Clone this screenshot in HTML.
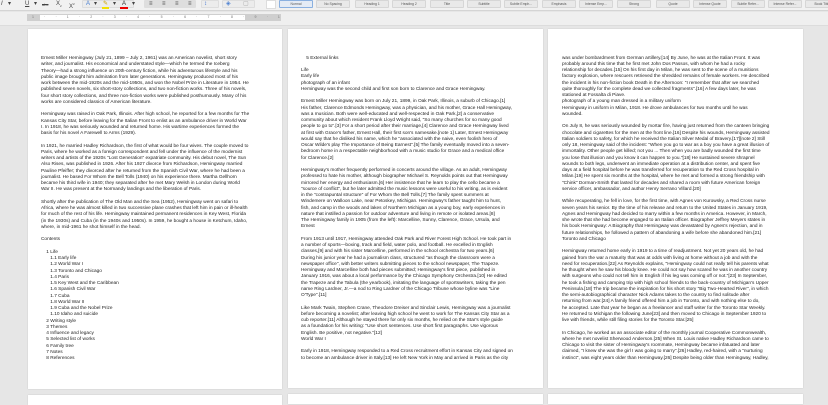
<!DOCTYPE html>
<html><head><meta charset="utf-8">
<style>
*{margin:0;padding:0;box-sizing:border-box}
html,body{width:828px;height:400px;overflow:hidden;background:#e6e6e6;font-family:"Liberation Sans",sans-serif}
#tb{position:absolute;left:0;top:0;width:828px;height:11px;background:#f1f1f1;border-bottom:1px solid #d4d4d4}
.ic{position:absolute;top:1px;font-size:6px;color:#444;line-height:7px}
.grp{position:absolute;top:0;height:8px;background:#e2e2e2;border-radius:1px}
.sb{position:absolute;top:0;height:8px;width:34px;background:#e9e9e9;border:1px solid #d6d6d6;border-radius:1px;font-size:3.4px;color:#555;text-align:center;line-height:6px;white-space:nowrap;overflow:hidden}
#rulerbg{position:absolute;left:0;top:12px;width:828px;height:14px;background:#efefef;border-bottom:1px solid #dcdcdc}
#ruler{position:absolute;left:27px;top:14px;width:254px;height:7px;background:#fff;border:1px solid #cfcfcf;overflow:hidden}
#ruler .m{position:absolute;top:0;height:5px;background:#cfcfcf}
#ruler .n{position:absolute;top:0;font-size:3.5px;color:#777;line-height:5px;white-space:nowrap;letter-spacing:4.6px}
.pg{position:absolute;background:#fff;box-shadow:0 0 1px #bbb}
.t{position:absolute;white-space:pre;font-size:4.75px;line-height:6.25px;color:#222}
</style></head><body>
<div id="tb">
 <span class="ic" style="left:1px;font-style:italic">I</span>
 <span class="ic" style="left:8px">▾</span>
 <span class="ic" style="left:25px;text-decoration:underline">U</span>
 <span class="ic" style="left:34px">▾</span>
 <span class="ic" style="left:42px;text-decoration:line-through;font-size:4px">abc</span>
 <span class="ic" style="left:56px">X<sub style="font-size:3px">2</sub></span>
 <span class="ic" style="left:69px">X<sup style="font-size:3px">2</sup></span>
 <div class="grp" style="left:82px;width:52px;background:#ececec;border:1px solid #ddd"></div>
 <span class="ic" style="left:86px;color:#4a7fd0">A</span><span class="ic" style="left:94px">▾</span>
 <span class="ic" style="left:103px;color:#c8a000">✎</span><div style="position:absolute;left:102px;top:7px;width:7px;height:1.5px;background:#f2e000"></div><span class="ic" style="left:113px">▾</span>
 <span class="ic" style="left:122px;color:#333">A</span><div style="position:absolute;left:120px;top:7px;width:8px;height:1.5px;background:#e00"></div><span class="ic" style="left:132px">▾</span>
 <div class="grp" style="left:144px;width:52px;background:#dedede"></div>
 <span class="ic" style="left:149px">≡</span><span class="ic" style="left:162px">≡</span><span class="ic" style="left:175px">≡</span><span class="ic" style="left:188px">≡</span>
 <div class="grp" style="left:201px;width:18px;background:#ececec;border:1px solid #ddd"></div>
 <span class="ic" style="left:204px;color:#3a6fd0">↕</span>
 <div class="grp" style="left:222px;width:33px;background:#ececec;border:1px solid #ddd"></div>
 <span class="ic" style="left:226px;color:#4a7fd0">◈</span><span class="ic" style="left:243px;color:#aaa">▢</span>
 <div style="position:absolute;left:266px;top:0;width:10px;height:9px;background:#fff;border:1px solid #ddd"></div>
 <div class="sb" style="left:279px;border-color:#8ab0e0;background:#e4ebf5">Normal</div>
 <div class="sb" style="left:316px">No Spacing</div>
 <div class="sb" style="left:355px">Heading 1</div>
 <div class="sb" style="left:392px">Heading 2</div>
 <div class="sb" style="left:430px">Title</div>
 <div class="sb" style="left:467px">Subtitle</div>
 <div class="sb" style="left:504px">Subtle Emph...</div>
 <div class="sb" style="left:542px">Emphasis</div>
 <div class="sb" style="left:579px">Intense Emp...</div>
 <div class="sb" style="left:617px">Strong</div>
 <div class="sb" style="left:656px">Quote</div>
 <div class="sb" style="left:693px">Intense Quote</div>
 <div class="sb" style="left:731px">Subtle Refer...</div>
 <div class="sb" style="left:768px">Intense Refer...</div>
 <div class="sb" style="left:805px">Book Title</div>
</div>
<div id="rulerbg"></div>
<div id="ruler">
 <div class="m" style="left:0;width:12px"></div>
 <div class="m" style="left:217px;width:35px"></div>
 <span class="n" style="left:4px">1 · · 1 · 2 · 3 · 4 · 5 · 6 · 7 · 8 · 9 · 10 11 12 13 14 15 16 17 18 19</span>
</div>

<div class="pg" style="left:28px;top:29px;width:254px;height:360px"></div>
<div class="pg" style="left:28px;top:395px;width:254px;height:10px"></div>
<div class="pg" style="left:288px;top:29px;width:255px;height:359px"></div>
<div class="pg" style="left:288px;top:394px;width:255px;height:10px"></div>
<div class="pg" style="left:548px;top:29px;width:255px;height:359px"></div>
<div class="pg" style="left:548px;top:394px;width:255px;height:10px"></div>

<div class="t" style="left:41px;top:56px">Ernest Miller Hemingway (July 21, 1899 – July 2, 1961) was an American novelist, short story
writer, and journalist. His economical and understated style—which he termed the Iceberg
Theory—had a strong influence on 20th-century fiction, while his adventurous lifestyle and his
public image brought him admiration from later generations. Hemingway produced most of his
work between the mid-1920s and the mid-1950s, and won the Nobel Prize in Literature in 1954. He
published seven novels, six short-story collections, and two non-fiction works. Three of his novels,
four short story collections, and three non-fiction works were published posthumously. Many of his
works are considered classics of American literature.

Hemingway was raised in Oak Park, Illinois. After high school, he reported for a few months for The
Kansas City Star, before leaving for the Italian Front to enlist as an ambulance driver in World War
I. In 1918, he was seriously wounded and returned home. His wartime experiences formed the
basis for his novel A Farewell to Arms (1929).

In 1921, he married Hadley Richardson, the first of what would be four wives. The couple moved to
Paris, where he worked as a foreign correspondent and fell under the influence of the modernist
writers and artists of the 1920s "Lost Generation" expatriate community. His debut novel, The Sun
Also Rises, was published in 1926. After his 1927 divorce from Richardson, Hemingway married
Pauline Pfeiffer; they divorced after he returned from the Spanish Civil War, where he had been a
journalist. He based For Whom the Bell Tolls (1940) on his experience there. Martha Gellhorn
became his third wife in 1940; they separated after he met Mary Welsh in London during World
War II. He was present at the Normandy landings and the liberation of Paris.

Shortly after the publication of The Old Man and the Sea (1952), Hemingway went on safari to
Africa, where he was almost killed in two successive plane crashes that left him in pain or ill-health
for much of the rest of his life. Hemingway maintained permanent residences in Key West, Florida
(in the 1930s) and Cuba (in the 1940s and 1950s). In 1959, he bought a house in Ketchum, Idaho,
where, in mid-1961 he shot himself in the head.

Contents

    1 Life
       1.1 Early life
       1.2 World War I
       1.3 Toronto and Chicago
       1.4 Paris
       1.5 Key West and the Caribbean
       1.6 Spanish Civil War
       1.7 Cuba
       1.8 World War II
       1.9 Cuba and the Nobel Prize
       1.10 Idaho and suicide
    2 Writing style
    3 Themes
    4 Influence and legacy
    5 Selected list of works
    6 Family tree
    7 Notes
    8 References</div>

<div class="t" style="left:301px;top:55.5px">    5 External links

Life
Early life
photograph of an infant
Hemingway was the second child and first son born to Clarence and Grace Hemingway.

Ernest Miller Hemingway was born on July 21, 1899, in Oak Park, Illinois, a suburb of Chicago.[1]
His father, Clarence Edmonds Hemingway, was a physician, and his mother, Grace Hall Hemingway,
was a musician. Both were well-educated and well-respected in Oak Park,[2] a conservative
community about which resident Frank Lloyd Wright said, "So many churches for so many good
people to go to".[3] For a short period after their marriage,[4] Clarence and Grace Hemingway lived
at first with Grace's father, Ernest Hall, their first son's namesake.[note 1] Later, Ernest Hemingway
would say that he disliked his name, which he "associated with the naive, even foolish hero of
Oscar Wilde's play The Importance of Being Earnest".[5] The family eventually moved into a seven-
bedroom home in a respectable neighborhood with a music studio for Grace and a medical office
for Clarence.[2]

Hemingway's mother frequently performed in concerts around the village. As an adult, Hemingway
professed to hate his mother, although biographer Michael S. Reynolds points out that Hemingway
mirrored her energy and enthusiasm.[6] Her insistence that he learn to play the cello became a
"source of conflict", but he later admitted the music lessons were useful to his writing, as is evident
in the "contrapuntal structure" of For Whom the Bell Tolls.[7] The family spent summers at
Windemere on Walloon Lake, near Petoskey, Michigan. Hemingway's father taught him to hunt,
fish, and camp in the woods and lakes of Northern Michigan as a young boy, early experiences in
nature that instilled a passion for outdoor adventure and living in remote or isolated areas.[8]
The Hemingway family in 1905 (from the left): Marcelline, Sunny, Clarence, Grace, Ursula, and
Ernest

From 1913 until 1917, Hemingway attended Oak Park and River Forest High School. He took part in
a number of sports—boxing, track and field, water polo, and football. He excelled in English
classes,[9] and with his sister Marcelline, performed in the school orchestra for two years.[6]
During his junior year he had a journalism class, structured "as though the classroom were a
newspaper office", with better writers submitting pieces to the school newspaper, The Trapeze.
Hemingway and Marcelline both had pieces submitted; Hemingway's first piece, published in
January 1916, was about a local performance by the Chicago Symphony Orchestra.[10] He edited
the Trapeze and the Tabula (the yearbook), imitating the language of sportswriters, taking the pen
name Ring Lardner, Jr.—a nod to Ring Lardner of the Chicago Tribune whose byline was "Line
O'Type".[11]

Like Mark Twain, Stephen Crane, Theodore Dreiser and Sinclair Lewis, Hemingway was a journalist
before becoming a novelist; after leaving high school he went to work for The Kansas City Star as a
cub reporter.[11] Although he stayed there for only six months, he relied on the Star's style guide
as a foundation for his writing: "Use short sentences. Use short first paragraphs. Use vigorous
English. Be positive, not negative."[12]
World War I

Early in 1918, Hemingway responded to a Red Cross recruitment effort in Kansas City and signed on
to become an ambulance driver in Italy.[13] He left New York in May and arrived in Paris as the city</div>

<div class="t" style="left:562px;top:55.5px">was under bombardment from German artillery.[14] By June, he was at the Italian Front. It was
probably around this time that he first met John Dos Passos, with whom he had a rocky
relationship for decades.[15] On his first day in Milan, he was sent to the scene of a munitions
factory explosion, where rescuers retrieved the shredded remains of female workers. He described
the incident in his non-fiction book Death in the Afternoon: "I remember that after we searched
quite thoroughly for the complete dead we collected fragments".[16] A few days later, he was
stationed at Fossalta di Piave.
photograph of a young man dressed in a military uniform
Hemingway in uniform in Milan, 1918. He drove ambulances for two months until he was
wounded.

On July 8, he was seriously wounded by mortar fire, having just returned from the canteen bringing
chocolate and cigarettes for the men at the front line.[16] Despite his wounds, Hemingway assisted
Italian soldiers to safety, for which he received the Italian Silver Medal of Bravery.[17][note 2] Still
only 18, Hemingway said of the incident: "When you go to war as a boy you have a great illusion of
immortality. Other people get killed; not you ... Then when you are badly wounded the first time
you lose that illusion and you know it can happen to you."[18] He sustained severe shrapnel
wounds to both legs, underwent an immediate operation at a distribution center, and spent five
days at a field hospital before he was transferred for recuperation to the Red Cross hospital in
Milan.[19] He spent six months at the hospital, where he met and formed a strong friendship with
"Chink" Dorman-Smith that lasted for decades and shared a room with future American foreign
service officer, ambassador, and author Henry Serrano Villard.[20]

While recuperating, he fell in love, for the first time, with Agnes von Kurowsky, a Red Cross nurse
seven years his senior. By the time of his release and return to the United States in January 1919,
Agnes and Hemingway had decided to marry within a few months in America. However, in March,
she wrote that she had become engaged to an Italian officer. Biographer Jeffrey Meyers states in
his book Hemingway: A Biography that Hemingway was devastated by Agnes's rejection, and in
future relationships, he followed a pattern of abandoning a wife before she abandoned him.[21]
Toronto and Chicago

Hemingway returned home early in 1919 to a time of readjustment. Not yet 20 years old, he had
gained from the war a maturity that was at odds with living at home without a job and with the
need for recuperation.[22] As Reynolds explains, "Hemingway could not really tell his parents what
he thought when he saw his bloody knee. He could not say how scared he was in another country
with surgeons who could not tell him in English if his leg was coming off or not."[23] In September,
he took a fishing and camping trip with high school friends to the back-country of Michigan's Upper
Peninsula.[18] The trip became the inspiration for his short story "Big Two-Hearted River", in which
the semi-autobiographical character Nick Adams takes to the country to find solitude after
returning from war.[24] A family friend offered him a job in Toronto, and with nothing else to do,
he accepted. Late that year he began as a freelancer and staff writer for the Toronto Star Weekly.
He returned to Michigan the following June[23] and then moved to Chicago in September 1920 to
live with friends, while still filing stories for the Toronto Star.[25]

In Chicago, he worked as an associate editor of the monthly journal Cooperative Commonwealth,
where he met novelist Sherwood Anderson.[25] When St. Louis native Hadley Richardson came to
Chicago to visit the sister of Hemingway's roommate, Hemingway became infatuated and later
claimed, "I knew she was the girl I was going to marry".[26] Hadley, red-haired, with a "nurturing
instinct", was eight years older than Hemingway.[26] Despite being older than Hemingway, Hadley,</div>
</body></html>
